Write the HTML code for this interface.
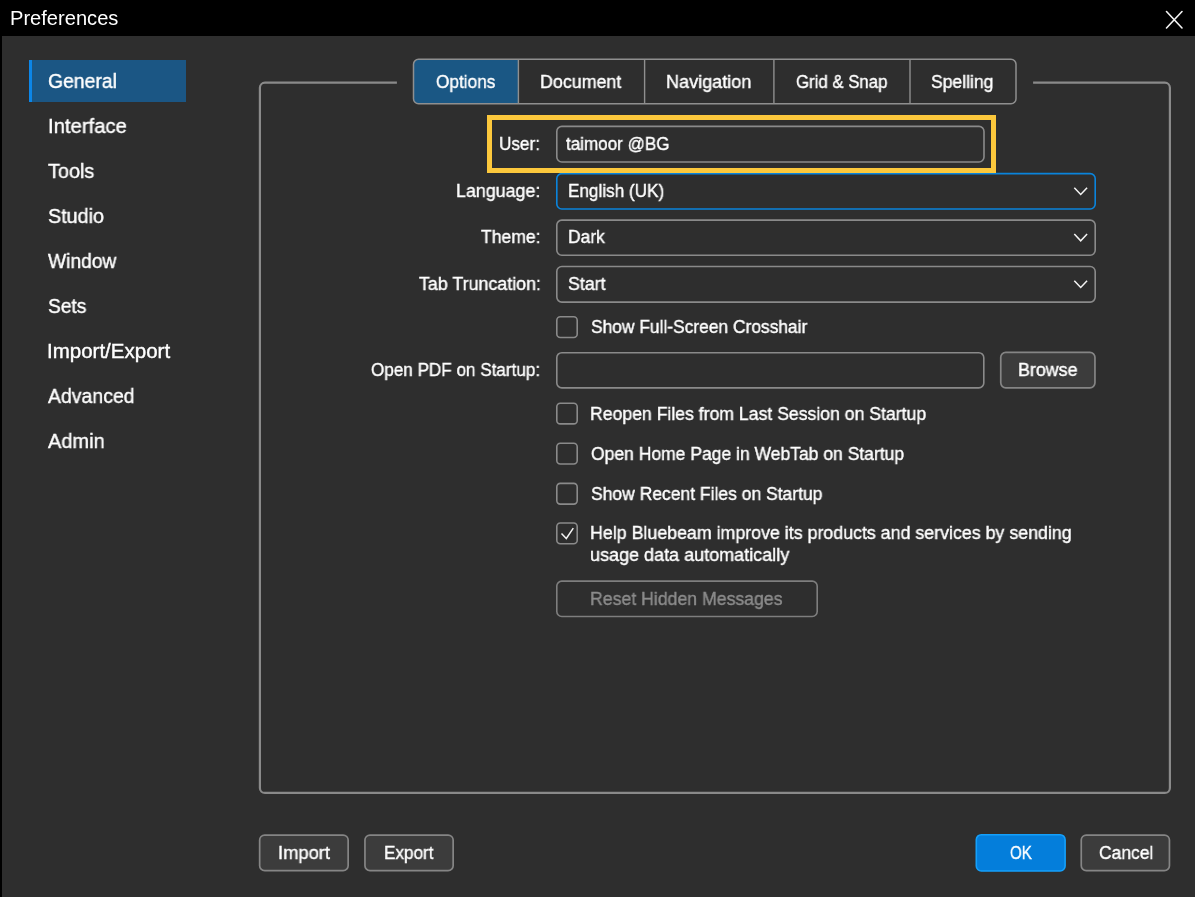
<!DOCTYPE html>
<html><head><meta charset="utf-8"><style>
html,body{margin:0;padding:0;}
body{width:1195px;height:897px;overflow:hidden;position:relative;background:#2e2e2e;font-family:"Liberation Sans",sans-serif;}
.t{position:absolute;white-space:nowrap;line-height:1;transform-origin:0 0;will-change:transform;-webkit-text-stroke:0.4px currentColor;}
svg{position:absolute;left:0;top:0;}
</style></head><body>
<svg width="1195" height="897" viewBox="0 0 1195 897">
<rect x="0.00" y="0.00" width="1195.00" height="36.00" rx="0" fill="#000"/>
<rect x="0.00" y="36.00" width="2.00" height="861.00" rx="0" fill="#000"/>
<path d="M1166.5 11.5 L1182 28 M1182 11.5 L1166.5 28" fill="none" stroke="#f4f4f4" stroke-width="1.6" stroke-linecap="round"/>
<rect x="29.00" y="60.00" width="157.00" height="42.00" rx="0" fill="#1b5684"/>
<rect x="29.00" y="60.00" width="3.00" height="42.00" rx="0" fill="#0c86e8"/>
<path d="M396.9 82.7 H264.9 A5 5 0 0 0 259.9 87.7 V787.9 A5 5 0 0 0 264.9 792.9 H1164.9 A5 5 0 0 0 1169.9 787.9 V87.7 A5 5 0 0 0 1164.9 82.7 H1033.1" fill="none" stroke="#8a8a8a" stroke-width="2.2"/>
<path d="M418.5 59.2 H518.4 V103.8 H418.5 A5 5 0 0 1 413.5 98.8 V64.2 A5 5 0 0 1 418.5 59.2 Z" fill="#1a5784"/>
<rect x="413.5" y="59.2" width="602.5" height="44.6" rx="5" fill="none" stroke="#8f8f8f" stroke-width="1.5"/>
<line x1="518.4" y1="59.2" x2="518.4" y2="103.8" stroke="#8f8f8f" stroke-width="1.4"/>
<line x1="644.6" y1="59.2" x2="644.6" y2="103.8" stroke="#8f8f8f" stroke-width="1.4"/>
<line x1="773.9" y1="59.2" x2="773.9" y2="103.8" stroke="#8f8f8f" stroke-width="1.4"/>
<line x1="910" y1="59.2" x2="910" y2="103.8" stroke="#8f8f8f" stroke-width="1.4"/>
<rect x="556.80" y="126.40" width="427.20" height="35.60" rx="5" fill="none" stroke="#8a8a8a" stroke-width="1.6"/>
<rect x="556.80" y="173.60" width="538.40" height="35.40" rx="5" fill="none" stroke="#0a84dc" stroke-width="1.6"/>
<path d="M1074.3 187.70 L1080.7 194.50 L1087.1 187.70" fill="none" stroke="#f4f4f4" stroke-width="1.5" />
<rect x="556.80" y="220.10" width="538.40" height="35.10" rx="5" fill="none" stroke="#8a8a8a" stroke-width="1.6"/>
<path d="M1074.3 234.05 L1080.7 240.85 L1087.1 234.05" fill="none" stroke="#f4f4f4" stroke-width="1.5" />
<rect x="556.80" y="266.50" width="538.40" height="35.60" rx="5" fill="none" stroke="#8a8a8a" stroke-width="1.6"/>
<path d="M1074.3 280.70 L1080.7 287.50 L1087.1 280.70" fill="none" stroke="#f4f4f4" stroke-width="1.5" />
<rect x="489.50" y="117.50" width="504.00" height="53.00" rx="0" fill="none" stroke="#fcc83c" stroke-width="5"/>
<rect x="556.80" y="316.80" width="20.40" height="20.70" rx="3.5" fill="none" stroke="#8a8a8a" stroke-width="1.6"/>
<rect x="556.80" y="403.20" width="20.40" height="20.70" rx="3.5" fill="none" stroke="#8a8a8a" stroke-width="1.6"/>
<rect x="556.80" y="443.30" width="20.40" height="20.70" rx="3.5" fill="none" stroke="#8a8a8a" stroke-width="1.6"/>
<rect x="556.80" y="483.40" width="20.40" height="20.70" rx="3.5" fill="none" stroke="#8a8a8a" stroke-width="1.6"/>
<rect x="556.80" y="523.00" width="20.40" height="20.70" rx="3.5" fill="none" stroke="#8a8a8a" stroke-width="1.6"/>
<path d="M561.5 533.6 L566.3 538.5 L573.3 528.2" fill="none" stroke="#f4f4f4" stroke-width="1.5" />
<rect x="556.80" y="352.70" width="427.00" height="35.20" rx="5" fill="none" stroke="#8a8a8a" stroke-width="1.6"/>
<rect x="1000.75" y="352.35" width="94.20" height="35.50" rx="5" fill="#3c3c3c" stroke="#858585" stroke-width="1.7"/>
<rect x="556.80" y="581.10" width="260.40" height="35.40" rx="5" fill="none" stroke="#7e7e7e" stroke-width="1.6"/>
<rect x="259.65" y="835.05" width="88.50" height="35.60" rx="5" fill="#3c3c3c" stroke="#858585" stroke-width="1.7"/>
<rect x="364.95" y="835.05" width="88.20" height="35.60" rx="5" fill="#3c3c3c" stroke="#858585" stroke-width="1.7"/>
<rect x="1081.25" y="835.05" width="88.20" height="35.60" rx="5" fill="#3c3c3c" stroke="#858585" stroke-width="1.7"/>
<rect x="976.30" y="834.70" width="88.80" height="36.30" rx="5" fill="#047edb" stroke="#14a0fb" stroke-width="1.6"/>
</svg>
<div class="t" style="left:10.39px;top:8.50px;font-size:19.6px;transform:scaleX(1.0258);color:#ffffff;-webkit-text-stroke:0;">Preferences</div>
<div class="t" style="left:47.51px;top:71.14px;font-size:20.5px;transform:scaleX(0.9445);color:#ffffff;">General</div>
<div class="t" style="left:47.58px;top:116.14px;font-size:20.5px;transform:scaleX(0.9896);color:#ffffff;">Interface</div>
<div class="t" style="left:48.12px;top:161.14px;font-size:20.5px;transform:scaleX(0.9674);color:#ffffff;">Tools</div>
<div class="t" style="left:47.53px;top:206.14px;font-size:20.5px;transform:scaleX(0.9625);color:#ffffff;">Studio</div>
<div class="t" style="left:48.35px;top:251.14px;font-size:20.5px;transform:scaleX(0.9376);color:#ffffff;">Window</div>
<div class="t" style="left:47.55px;top:296.14px;font-size:20.5px;transform:scaleX(0.9349);color:#ffffff;">Sets</div>
<div class="t" style="left:46.76px;top:341.14px;font-size:20.5px;transform:scaleX(1.0004);color:#ffffff;">Import/Export</div>
<div class="t" style="left:48.38px;top:386.14px;font-size:20.5px;transform:scaleX(0.9488);color:#ffffff;">Advanced</div>
<div class="t" style="left:48.38px;top:431.14px;font-size:20.5px;transform:scaleX(0.9751);color:#ffffff;">Admin</div>
<div class="t" style="left:436.08px;top:72.67px;font-size:18.7px;transform:scaleX(0.9219);color:#ffffff;">Options</div>
<div class="t" style="left:540.23px;top:72.67px;font-size:18.7px;transform:scaleX(0.9544);color:#ffffff;">Document</div>
<div class="t" style="left:666.32px;top:72.67px;font-size:18.7px;transform:scaleX(0.9660);color:#ffffff;">Navigation</div>
<div class="t" style="left:796.12px;top:72.67px;font-size:18.7px;transform:scaleX(0.8976);color:#ffffff;">Grid &amp; Snap</div>
<div class="t" style="left:931.21px;top:72.67px;font-size:18.7px;transform:scaleX(0.9383);color:#ffffff;">Spelling</div>
<div class="t" style="left:499.32px;top:134.77px;font-size:18.7px;transform:scaleX(0.9178);color:#ffffff;">User:</div>
<div class="t" style="left:456.03px;top:182.37px;font-size:18.7px;transform:scaleX(0.9547);color:#ffffff;">Language:</div>
<div class="t" style="left:480.84px;top:228.07px;font-size:18.7px;transform:scaleX(0.9395);color:#ffffff;">Theme:</div>
<div class="t" style="left:418.54px;top:275.27px;font-size:18.7px;transform:scaleX(0.9543);color:#ffffff;">Tab Truncation:</div>
<div class="t" style="left:371.08px;top:360.87px;font-size:18.7px;transform:scaleX(0.9145);color:#ffffff;">Open PDF on Startup:</div>
<div class="t" style="left:566.31px;top:134.97px;font-size:18.7px;transform:scaleX(0.9118);color:#ffffff;">taimoor @BG</div>
<div class="t" style="left:567.78px;top:181.77px;font-size:18.7px;transform:scaleX(0.9164);color:#ffffff;">English (UK)</div>
<div class="t" style="left:567.76px;top:228.07px;font-size:18.7px;transform:scaleX(0.9333);color:#ffffff;">Dark</div>
<div class="t" style="left:568.10px;top:275.27px;font-size:18.7px;transform:scaleX(0.9511);color:#ffffff;">Start</div>
<div class="t" style="left:590.72px;top:318.17px;font-size:18.7px;transform:scaleX(0.9297);color:#ffffff;">Show Full-Screen Crosshair</div>
<div class="t" style="left:590.34px;top:404.57px;font-size:18.7px;transform:scaleX(0.9434);color:#ffffff;">Reopen Files from Last Session on Startup</div>
<div class="t" style="left:590.97px;top:444.67px;font-size:18.7px;transform:scaleX(0.9370);color:#ffffff;">Open Home Page in WebTab on Startup</div>
<div class="t" style="left:590.71px;top:484.77px;font-size:18.7px;transform:scaleX(0.9361);color:#ffffff;">Show Recent Files on Startup</div>
<div class="t" style="left:590.33px;top:524.37px;font-size:18.7px;transform:scaleX(0.9521);color:#ffffff;">Help Bluebeam improve its products and services by sending</div>
<div class="t" style="left:590.46px;top:546.37px;font-size:18.7px;transform:scaleX(0.9636);color:#ffffff;">usage data automatically</div>
<div class="t" style="left:1018.13px;top:361.07px;font-size:18.7px;transform:scaleX(0.9549);color:#ffffff;">Browse</div>
<div class="t" style="left:590.34px;top:589.67px;font-size:18.7px;transform:scaleX(0.9457);color:#8c8c8c;">Reset Hidden Messages</div>
<div class="t" style="left:277.88px;top:843.97px;font-size:18.7px;transform:scaleX(0.9816);color:#ffffff;">Import</div>
<div class="t" style="left:383.98px;top:843.97px;font-size:18.7px;transform:scaleX(0.9170);color:#ffffff;">Export</div>
<div class="t" style="left:1098.86px;top:843.97px;font-size:18.7px;transform:scaleX(0.9333);color:#ffffff;">Cancel</div>
<div class="t" style="left:1009.94px;top:843.97px;font-size:18.7px;transform:scaleX(0.8103);color:#ffffff;">OK</div>
</body></html>
